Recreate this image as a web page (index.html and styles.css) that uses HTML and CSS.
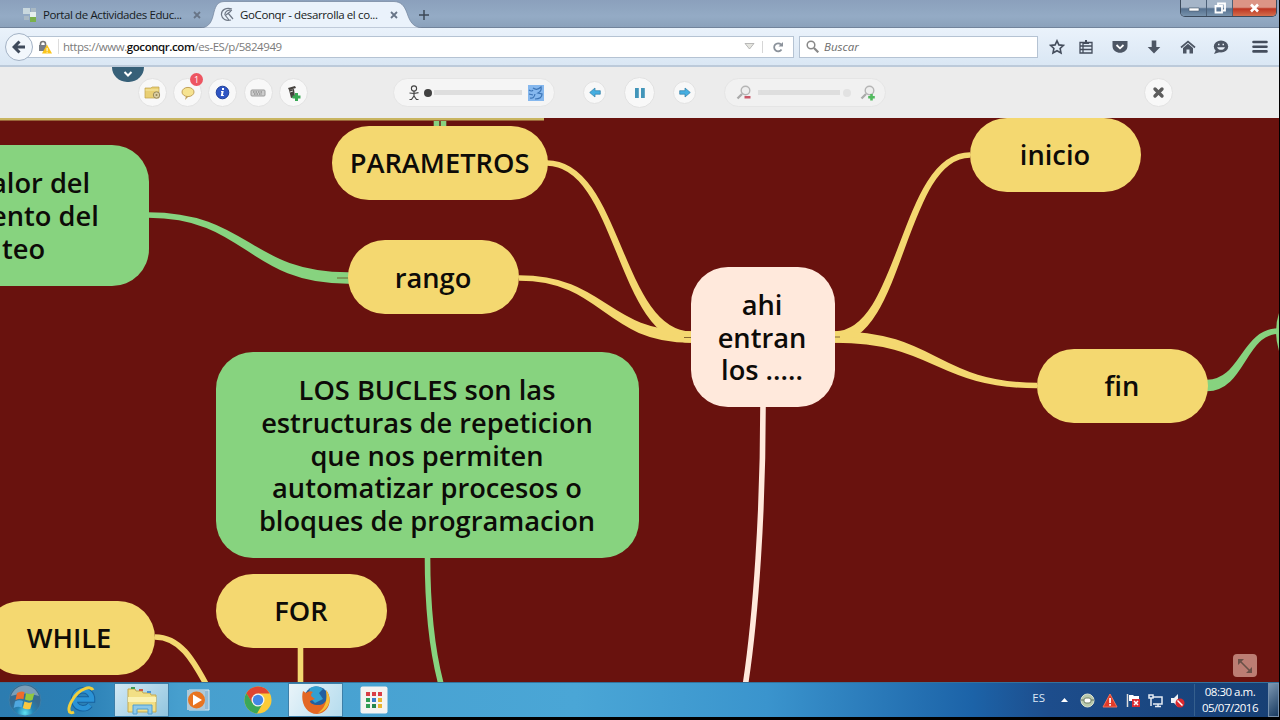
FILE: index.html
```html
<!DOCTYPE html>
<html lang="es">
<head>
    <meta charset="UTF-8">
    <meta name="viewport" content="width=device-width, initial-scale=1.0">
    <title>GoConqr - desarrolla el conocimiento</title>
    <link rel="stylesheet" href="styles.css">
</head>
<body>
  <div class="screen">
    <!-- Tabs -->
    <header class="tab-strip">
      <div class="tab">
        <svg class="favicon" width="14" height="14" viewBox="0 0 14 14"><path fill="#c9d8de" d="M0 0h7v6H0z"/><path fill="#e6efee" d="M7 4h6v5H7z"/><path fill="#a9b9c4" d="M8 0h5v4H8zM1 8h5v4H1z"/><path fill="#7ab04c" d="M7 9h6v5H7z"/></svg>
        <span class="tab-title t1">Portal de Actividades Educ...</span>
        <svg class="tab-close" width="8" height="8" viewBox="0 0 8 8"><path d="M1 1l6 6M7 1L1 7"/></svg>
      </div>
      <div class="tab active">
        <svg class="tab-shape" width="224" height="27" viewBox="0 0 224 27"><path d="M-4 27C5 26 7 20 9 11C11 4 13 1 19 .5H189C196 1 199 4 202 12C205 21 208 26 217 27Z" fill="#eaf2fb" stroke="#71839b" stroke-width=".7"/></svg>
        <svg class="favicon" width="14" height="15" viewBox="0 0 14 15"><path d="M12 2C6 0 1 3 1.500 8C2 12 6 14.500 11 13M12 3.500C8 2 4.500 5 5 8M8 6l5 6M11 4L6 8M5 8l4 5" fill="none" stroke="#6e7785" stroke-width="1.200"/></svg>
        <span class="tab-title t2">GoConqr - desarrolla el co...</span>
        <svg class="tab-close" width="8" height="8" viewBox="0 0 8 8"><path d="M1 1l6 6M7 1L1 7"/></svg>
      </div>
      <svg class="new-tab" width="10" height="10" viewBox="0 0 10 10"><path d="M5 0v10M0 5h10" stroke="#3d4856" stroke-width="1.500"/></svg>
      <div class="window-buttons">
        <span class="win-btn"><svg width="12" height="10" viewBox="0 0 12 10"><path d="M1 5h10v3H1z" fill="#fff" stroke="#4b5b6d" stroke-width=".6"/></svg></span>
        <span class="win-btn"><svg width="12" height="12" viewBox="0 0 12 12"><path d="M4 3V1.500h7v7H9M1.500 4H8v6.500H1.500Z" fill="none" stroke="#fff" stroke-width="1.800"/></svg></span>
        <span class="win-btn win-close"><svg width="11" height="10" viewBox="0 0 11 10"><path d="M2 1.500l7 7M9 1.500l-7 7" stroke="#fff" stroke-width="2.600"/></svg></span>
      </div>
    </header>

    <!-- Address bar -->
    <nav class="nav-bar">
      <span class="back"><svg width="14" height="14" viewBox="0 0 14 14"><path d="M13 7H3M7.500 1.500L2 7l5.500 5.500" fill="none" stroke="#3f4a5b" stroke-width="3"/></svg></span>
      <div class="url-box">
        <svg class="lock" width="14" height="14" viewBox="0 0 14 14"><path d="M2.500 6V4a2.500 2.500 0 0 1 5 0v2" fill="none" stroke="#777" stroke-width="1.600"/><path d="M1 5h7.500v6H1z" fill="#777c84"/><path d="M9 4.500l5 9H4z" fill="#fbc51b"/><path d="M8.600 8h1v3h-1zM8.600 11.700h1v1h-1z" fill="#fff"/></svg>
        <span class="url">https://www.<b>goconqr.com</b>/es-ES/p/5824949</span>
        <svg class="drop" width="11" height="7" viewBox="0 0 11 7"><path d="M1 .5h9L5.500 6z" fill="#e5e5df" stroke="#aaa" stroke-width=".8"/></svg>
        <span class="reload"><svg width="12" height="12" viewBox="0 0 12 12"><path d="M9 3.500A4 4 0 1 0 9.500 8.500" fill="none" stroke="#8b929b" stroke-width="1.800"/><path d="M6.500 5.500H11V1z" fill="#8b929b"/></svg></span>
      </div>
      <div class="search-box">
        <svg width="13" height="13" viewBox="0 0 13 13"><circle cx="5" cy="5" r="3.800" fill="none" stroke="#888" stroke-width="1.500"/><path d="M8 8l4.300 4.300" stroke="#888" stroke-width="2.200"/></svg>
        <span>Buscar</span>
      </div>
      <div class="nav-icons">
        <svg width="16" height="16" viewBox="0 0 16 16"><path d="M8 1.800l1.900 4.100 4.500.5-3.300 3.100.9 4.400L8 11.700l-4 2.200.9-4.400L1.600 6.400l4.500-.5z" fill="none" stroke="#444d5c" stroke-width="1.600"/></svg>
        <svg width="16" height="16" viewBox="0 0 16 16"><path d="M2 3.500h12v10.500H2zM2 7h12M2 10.500h12M5 4v10" fill="none" stroke="#444d5c" stroke-width="1.300"/><path d="M5 3h2V1h2v2h2v2H5z" fill="#444d5c"/></svg>
        <svg width="16" height="16" viewBox="0 0 16 16"><path d="M.5 2h15v5c0 9-15 9-15 0z" fill="#4d5664"/><path d="M4.500 6L8 9.300 11.500 6" fill="none" stroke="#fff" stroke-width="1.800"/></svg>
        <svg width="16" height="16" viewBox="0 0 16 16"><path d="M5.700 1.500h4.600V8h4L8 14.500 1.700 8h4z" fill="#4d5664"/></svg>
        <svg width="16" height="16" viewBox="0 0 16 16"><path d="M1 8.500l7-6 7 6" fill="none" stroke="#4d5664" stroke-width="1.700"/><path d="M3 9l5-4.300L13 9v5.500H9.500v-4h-3v4H3z" fill="#4d5664"/></svg>
        <svg width="16" height="16" viewBox="0 0 16 16"><ellipse cx="8" cy="7.500" rx="7.200" ry="6" fill="#4d5664"/><path d="M3 11l-2 4 6-2z" fill="#4d5664"/><path d="M4 8.300c1 3.400 7 3.400 8 0z" fill="#e7eff8"/><path d="M5 5.500h1.500M9.500 5.500H11" stroke="#e7eff8" stroke-width="1.300"/></svg>
        <svg class="menu" width="16" height="16" viewBox="0 0 16 16"><path d="M1.500 3h13M1.500 7.700h13M1.500 12.400h13" stroke="#444d5c" stroke-width="2.600" stroke-linecap="round"/></svg>
      </div>
    </nav>

    <!-- Mind map toolbar -->
    <div class="toolbar">
      <span class="pull-down"><svg width="10" height="8" viewBox="0 0 10 8"><path d="M1.500 2L5 5.500 8.500 2" fill="none" stroke="#fff" stroke-width="2"/></svg></span>
      <div class="tools">
        <span class="round"><svg width="18" height="16" viewBox="0 0 18 16"><path d="M1 3h6l1-1h7v11H1z" fill="#e9cf73" stroke="#c0a24b" stroke-width=".7"/><path d="M1.500 5h13" stroke="#f8eba9"/><circle cx="12.500" cy="10" r="3.200" fill="#ddd0a3" stroke="#988a61"/><circle cx="12.500" cy="10" r="1" fill="#968650"/></svg></span>
        <span class="round"><svg width="16" height="16" viewBox="0 0 16 16"><path d="M6 11l-1 4 4-4z" fill="#bc9d55"/><ellipse cx="8" cy="7" rx="6" ry="4.600" fill="#f6e391" stroke="#c3a25b"/></svg><i class="badge">1</i></span>
        <span class="round"><svg width="15" height="15" viewBox="0 0 15 15"><circle cx="7.500" cy="7.500" r="6.300" fill="#2f55c4" stroke="#1f409c"/><path d="M7 3h2v2H7zM6 6h2.700l-.8 4h1v1H5.800l.7-4H6z" fill="#fff"/></svg></span>
        <span class="round"><svg width="16" height="12" viewBox="0 0 16 12"><rect x="1" y="3" width="14" height="6" rx="1" fill="#ccc" stroke="#999"/><path d="M3 5h10M4 7h8" stroke="#777" stroke-dasharray="1.500 1"/></svg></span>
        <span class="round"><svg width="16" height="16" viewBox="0 0 16 16"><path d="M3 3l7-2 1 2-7 2zM4 5l5-1 1 8-4 1z" fill="#45413e"/><path d="M5 7l3-1" stroke="#ddd"/><path d="M10 8h3v2.500h2.500v3H13V16h-3v-2.500H7.500v-3H10z" fill="#38a853"/></svg></span>
      </div>
      <div class="slider">
        <svg width="12" height="18" viewBox="0 0 12 18"><circle cx="6" cy="4.500" r="2.600" fill="none" stroke="#444" stroke-width="1.100"/><path d="M6 7v5M1.500 9l4.500.5 4.500-.8M1.500 15.500h2L6 12l2.500 3.500h2" fill="none" stroke="#444" stroke-width="1.200"/></svg>
        <i class="knob"></i><i class="track"></i>
        <svg class="sketch" width="16" height="16" viewBox="0 0 16 16"><path fill="#86b8ee" d="M0 0h16v16H0z"/><path d="M5 3q4 3 8-1q1 4-3 6l4 1q0 5-7 5M1 5q3 2 4 0M1 9l4 1M2 13q4 1 5-4" fill="none" stroke="#3c74b5" stroke-width="1.200"/></svg>
      </div>
      <div class="player">
        <span class="round small"><svg width="12" height="11" viewBox="0 0 12 11"><path d="M6 1v2.700h5.300v3.500H6V10L.7 5.500z" fill="#45aee1" stroke="#317ea6" stroke-width=".7"/></svg></span>
        <span class="round big"><svg width="10" height="12" viewBox="0 0 10 12"><path d="M0 1h3.800v10H0zM6 1h3.800v10H6z" fill="#4295b9"/></svg></span>
        <span class="round small"><svg width="12" height="11" viewBox="0 0 12 11"><path d="M6 1v2.700H.7v3.500H6V10l5.300-4.500z" fill="#45aee1" stroke="#317ea6" stroke-width=".7"/></svg></span>
      </div>
      <div class="slider zoom">
        <svg width="16" height="16" viewBox="0 0 16 16"><circle cx="9.500" cy="5.500" r="4.300" fill="#eee" stroke="#b5b5b5" stroke-width="1.400"/><path d="M6 9l-4.500 4.500" stroke="#aaa" stroke-width="2.300"/><path d="M8.500 11h6v2.500h-6z" fill="#c95768"/></svg>
        <i class="track"></i><i class="knob"></i>
        <svg width="16" height="16" viewBox="0 0 16 16"><circle cx="9.500" cy="5.500" r="4.300" fill="#eee" stroke="#b5b5b5" stroke-width="1.400"/><path d="M6 9l-4.500 4.500" stroke="#aaa" stroke-width="2.300"/><path d="M10.200 9h2.600v2h2v2.500h-2v2h-2.600v-2h-2V11h2z" fill="#51b95e"/></svg>
      </div>
      <span class="round close"><svg width="13" height="13" viewBox="0 0 13 13"><path d="M3 3l7 7M10 3l-7 7" stroke="#5c5c5c" stroke-width="3.400" stroke-linecap="round"/></svg></span>
    </div>

    <!-- Mind map -->
    <main class="canvas">
      <svg class="links" width="1279" height="564" viewBox="0 118 1279 564">
        <path class="bar" d="M0 118H544V120.500H0z"/>
        <path class="green" d="M436.500 121V128M443.500 121V128"/>
        <path class="green" d="M148 215C248 215 248 275 348 275V281C248 281 248 215 148 215Z"/>
        <path class="yellow" d="M547 163C619 163 619 334 691 334V340C619 340 619 163 547 163Z"/>
        <path class="yellow" d="M519 278C605 278 605 334 691 334V340C605 340 605 278 519 278Z"/>
        <path class="yellow" d="M970 155C902 155 902 334 835 334V340C902 340 902 155 970 155Z"/>
        <path class="yellow" d="M1037 385.500C936 385.500 936 334 835 334V340C936 340 936 385.500 1037 385.500Z"/>
        <path class="green" d="M1279 331C1243 331 1243 382.500 1207 382.500V388.500C1243 388.500 1243 331 1279 331Z"/>
        <path class="yellow line" d="M155 637C180 637 193 660 206 684M300.500 646V684"/>
        <path class="green line" d="M427.500 556C427.500 605 432 650 441 684"/>
        <path class="cream line" d="M763 406C763 510 756 615 745.500 684"/>
        <path class="slit" d="M337 278H348M684 337.500H691M835 337H840"/>
        <path class="edge" d="M1279 313Q1273 331 1279 351Z"/>
      </svg>
      <div class="node node-green n-valor"><span>alor del</span><span>ento del</span><span class="last">teo</span></div>
      <div class="node n-parametros">PARAMETROS</div>
      <div class="node n-rango">rango</div>
      <div class="node node-cream n-ahi">ahi<br>entran<br>los .....</div>
      <div class="node n-inicio">inicio</div>
      <div class="node n-fin">fin</div>
      <div class="node node-green n-bucles">LOS BUCLES son las<br>estructuras de repeticion<br>que nos permiten<br>automatizar procesos o<br>bloques de programacion</div>
      <div class="node n-for">FOR</div>
      <div class="node n-while">WHILE</div>
      <span class="expand"><svg width="18" height="18" viewBox="0 0 18 18"><path d="M4 4l10 10" stroke="#695048" stroke-width="1.600"/><path d="M2 2h6L2 8zM16 16h-6l6-6z" fill="#695048"/></svg></span>
    </main>

    <!-- Windows taskbar -->
    <footer class="taskbar">
      <span class="task start"><svg width="36" height="34" viewBox="0 0 36 34"><defs><radialGradient id="orb" cy=".9"><stop offset="0" stop-color="#5ee3f4"/><stop offset=".5" stop-color="#2483b6"/><stop offset="1" stop-color="#356b92"/></radialGradient></defs><circle cx="18" cy="17" r="16" fill="url(#orb)" stroke="#3c7faa"/><path d="M4 13C9-1 27-1 32 13Q18 8 4 13" fill="#fff" opacity=".35"/><path d="M10 10q4-2.500 7.500-1l-1 7q-4-1-8 1z" fill="#ef6b2b"/><path d="M19 10q4 2 8.500 0l-2 7q-3.500 1.500-7.500-.5z" fill="#91c83f"/><path d="M8 18.500q4-2 8-.5l-1.300 6.500q-4-1.500-8 .5z" fill="#50a7df"/><path d="M17.500 18.500q4 2 7.700.5l-2 7q-4 1-7.400-1z" fill="#fac741"/></svg></span>
      <span class="task ie"><svg width="30" height="30" viewBox="0 0 30 30"><path d="M23 20A9 9 0 1 1 25 14.500H9" fill="none" stroke="#17629f" stroke-width="6.500"/><path d="M23 20A9 9 0 1 1 25 14.500H9" fill="none" stroke="#2b93d6" stroke-width="4.500"/><path d="M26 5C24 0 12 4 6 14C0 23 1 30 7 27" fill="none" stroke="#f0cf3d" stroke-width="3"/></svg></span>
      <span class="task open explorer"><svg width="32" height="30" viewBox="0 0 32 30"><path d="M2 4h7l1 2h6l1 2h7l1 2h5v17H2z" fill="#f2df85" stroke="#c4a94e"/><path d="M2 12h28v5H2z" fill="#fbf2b4"/><path d="M5 2h4v2H5z" fill="#3c9c54"/><path d="M13 4h4v2h-4z" fill="#cf5744"/><path d="M21 6h4v2h-4z" fill="#4c92d2"/><path d="M7 29V20h19v9h-4v-5H11v5z" fill="#8ec9e9" stroke="#4f9ed1"/></svg></span>
      <span class="task media"><svg width="25" height="24" viewBox="0 0 25 24"><path d="M3 2h20v20H3z" fill="#90bbd7" stroke="#dcebf3"/><path d="M1 2h18v20H1z" fill="#aec9d8"/><circle cx="10.500" cy="12" r="8.500" fill="#e87420"/><path d="M7 6.500l9 5.500-9 5.500z" fill="#fff"/></svg></span>
      <span class="task chrome"><svg width="28" height="28" viewBox="0 0 28 28"><circle cx="14" cy="14" r="13.500" fill="#fbcb38"/><path d="M25.700 7.500H14L8 17 2.300 7.250A13.500 13.500 0 0 1 25.700 7.500" fill="#df4532"/><path d="M2.300 7.250A13.500 13.500 0 0 0 13 27.500L19 17 8.500 17z" fill="#3ba757"/><circle cx="14" cy="14" r="6.500" fill="#f4f4f0"/><circle cx="14" cy="14" r="5.200" fill="#4388e6"/></svg></span>
      <span class="task open firefox"><svg width="30" height="30" viewBox="0 0 30 30"><circle cx="15.500" cy="14" r="12.500" fill="#245e9f"/><path d="M9 3q7-4 13 1l-4 4 4 6-8 4-7-7z" fill="#32a0d2"/><path d="M2 6C-1 17 5 29 16 29C29 28 32 13 25 5C28 14 24 20 17 20C12 20 9 18 9 16L14 14 10 11Q10 8 12 7Q8 5 5 8z" fill="#e36724"/><path d="M25 5C32 14 28 25 17 28C26 21 26 14 25 5" fill="#f6bd35"/></svg></span>
      <span class="task apps"><svg width="28" height="28" viewBox="0 0 28 28"><rect x=".5" y=".5" width="27" height="27" rx="2" fill="#f4f3f1"/><path d="M6 6h4v4H6zM12 6h4v4h-4zM18 6h4v4h-4z" fill="#d93e46"/><path d="M6 12h4v4H6zM6 18h4v4H6z" fill="#2f9c54"/><path d="M12 12h4v4h-4z" fill="#3a7cc8"/><path d="M18 12h4v4h-4zM18 18h4v4h-4z" fill="#e9b52f"/><path d="M12 18h4v4h-4z" fill="#26854c"/></svg></span>
      <div class="tray">
        <span class="lang">ES</span>
        <svg class="up" width="7" height="4" viewBox="0 0 7 4"><path d="M0 4l3.500-4L7 4z" fill="#fff"/></svg>
        <svg width="15" height="15" viewBox="0 0 15 15"><circle cx="7.500" cy="7.500" r="6.500" fill="#b8c9ac" stroke="#dde4d0"/><path d="M1 7h13" stroke="#687761"/><rect x="4" y="5" width="7" height="5" rx="2" fill="#fff" stroke="#718067"/></svg>
        <svg class="warn" width="16" height="15" viewBox="0 0 16 15"><path d="M8 1l7 13H1z" fill="#e23b29" stroke="#f17158"/><path d="M7.200 5h1.700v5H7.200zM7.200 11h1.700v1.700H7.200z" fill="#fff"/></svg>
        <svg class="flag" width="15" height="15" viewBox="0 0 15 15"><path d="M1.500 1v13" stroke="#ddd" stroke-width="1.500"/><path d="M3 2h4l1 1h5v6H7L6 8H3z" fill="#fff"/><path d="M6 6h8v8H6z" fill="#da2c32"/><path d="M8 8l4 4M12 8l-4 4" stroke="#fff" stroke-width="1.500"/></svg>
        <svg width="15" height="15" viewBox="0 0 15 15"><path d="M5 4h9v7H5M7 13.500h6M10 11v3M1 2h4v3H1zM3 5v8" fill="none" stroke="#e5ebf3" stroke-width="1.500"/></svg>
        <svg width="15" height="15" viewBox="0 0 15 15"><path d="M1 5h3l4-4v13l-4-4H1z" fill="#eef2f6"/><circle cx="10" cy="10" r="4.500" fill="#db292f"/><path d="M7.500 7.500l5 5" stroke="#fff" stroke-width="1.500"/></svg>
        <div class="clock"><span>08:30 a.m.</span><span>05/07/2016</span></div>
        <i class="show-desktop"></i>
      </div>
    </footer>
  </div>
</body>
</html>
```
FILE: styles.css
```css
* {
  box-sizing: border-box;
}

body {
  margin: 0;
  background: #000;
  font-family: "Open Sans", "Noto Sans", sans-serif;
}

svg {
  display: block;
  flex: none;
}

.screen {
  display: flex;
  flex-direction: column;
  width: 1280px;
  height: 720px;
  padding: 0 1px 3px 0;
  overflow: hidden;
}

/* tabs */
.tab-strip {
  display: flex;
  height: 28px;
  flex: none;
  background: linear-gradient(#8ba0bc, #94abc5 60%, #8ba1bb);
  border-bottom: 1px solid #71839b;
}

.tab {
  display: flex;
  align-items: center;
  position: relative;
  width: 205px;
  padding: 2px 0 0 23px;
}

.tab.active {
  width: 213px;
  padding-left: 15px;
}

.tab-shape {
  position: absolute;
  left: 0;
  top: 1px;
  overflow: visible;
}

.favicon,
.tab-title,
.tab-close {
  position: relative;
}

.tab-title {
  margin-left: 6px;
  font-size: 11.5px;
  line-height: 16px;
  white-space: nowrap;
  color: #161b22;
}

.t1 {
  width: 150px;
  letter-spacing: -0.4px;
}

.t2 {
  width: 150px;
  letter-spacing: -0.38px;
}

.tab-close path {
  stroke: #687587;
  stroke-width: 1.8;
}

.new-tab {
  margin: 10px 0 0 1px;
}

.window-buttons {
  display: flex;
  height: 17px;
  margin-left: auto;
  margin-right: 2px;
  border: 1px solid #3c4b5d;
  border-top: 0;
  border-radius: 0 0 5px 5px;
  overflow: hidden;
}

.win-btn {
  display: flex;
  align-items: center;
  justify-content: center;
  width: 26px;
  border-right: 1px solid #4c6077;
  background: linear-gradient(#a5b5c8 45%, #56718f 55%, #7792ac);
}

.win-close {
  width: 43px;
  border: 0;
  background: linear-gradient(#dc9586 45%, #bd3522 55%, #d46e4d);
}

/* address bar */
.nav-bar {
  display: flex;
  align-items: center;
  position: relative;
  height: 39px;
  flex: none;
  padding-left: 5px;
  background: linear-gradient(#eaf2fb, #dae7f4);
  border-bottom: 2px solid #bccada;
}

.back {
  display: flex;
  align-items: center;
  justify-content: center;
  z-index: 1;
  width: 28px;
  height: 28px;
  border: 1px solid #a3b2c5;
  border-radius: 50%;
  background: #f2f7fc;
}

.url-box,
.search-box {
  display: flex;
  align-items: center;
  height: 22px;
  background: #fff;
  border: 1px solid #b5c3d3;
}

.url-box {
  width: 768px;
  margin-left: -7px;
  padding-left: 11px;
}

.url {
  width: 684px;
  margin-left: 6px;
  padding-left: 4px;
  border-left: 1px solid #ddd;
  font-size: 11.5px;
  line-height: 15px;
  letter-spacing: -0.43px;
  color: #7b7b7b;
}

.url b {
  font-weight: 600;
  color: #111;
}

.drop {
  margin-left: 2px;
}

.reload {
  margin-left: 7px;
  padding-left: 9px;
  border-left: 1px solid #d6d6d6;
}

.search-box {
  width: 239px;
  margin-left: 5px;
  padding-left: 6px;
  gap: 5px;
  font-size: 11.5px;
  font-style: italic;
  color: #6d6d6d;
}

.nav-icons {
  display: flex;
  gap: 17.9px;
  margin-left: 11px;
}

.nav-icons svg:first-child {
  margin-right: -5px;
}

.nav-icons .menu {
  margin-left: 5px;
}

/* toolbar */
.toolbar {
  display: flex;
  align-items: center;
  position: relative;
  height: 51px;
  flex: none;
  padding-left: 138px;
  background: #ececec;
}

.pull-down {
  display: flex;
  justify-content: center;
  position: absolute;
  left: 112px;
  top: 0;
  width: 32px;
  height: 15px;
  padding-top: 3px;
  border-radius: 0 0 16px 16px;
  background: #376078;
}

.round {
  display: flex;
  align-items: center;
  justify-content: center;
  position: relative;
  width: 29px;
  height: 29px;
  border: 1px solid #e2e2e2;
  border-radius: 50%;
  background: #f8f8f8;
}

.tools {
  display: flex;
  gap: 6.2px;
  width: 255px;
}

.badge {
  position: absolute;
  left: 16px;
  top: -6px;
  width: 13px;
  height: 13px;
  border-radius: 50%;
  background: #ed5561;
  color: #fff;
  font-size: 9px;
  font-style: normal;
  line-height: 13px;
  text-align: center;
}

.slider {
  display: flex;
  align-items: center;
  width: 162px;
  height: 29px;
  padding-left: 14px;
  border: 1px solid #e5e5e5;
  border-radius: 15px;
  background: #f5f5f5;
}

.knob {
  width: 8px;
  height: 8px;
  margin-left: 4px;
  border-radius: 50%;
  background: #414141;
}

.track {
  width: 88px;
  height: 5px;
  margin-left: 2px;
  background: #dedede;
}

.sketch {
  margin-left: 6px;
}

.player {
  display: flex;
  align-items: center;
  gap: 18px;
  margin-left: 28px;
}

.small {
  width: 23px;
  height: 23px;
}

.big {
  width: 31px;
  height: 31px;
}

.zoom {
  margin-left: 28px;
  padding-left: 11px;
  background: #f1f1f1;
}

.zoom .track {
  width: 82px;
  margin-left: 6px;
}

.zoom .knob {
  margin: 0 9px 0 3px;
  background: #e2e2e2;
}

.close {
  margin-left: 258px;
}

/* mind map */
.canvas {
  position: relative;
  height: 564px;
  flex: none;
  overflow: hidden;
  background: #69120e;
}

.links {
  position: absolute;
  left: 0;
  top: 0;
}

.yellow {
  fill: #f4d870;
  stroke: #f4d870;
  stroke-width: 5.6;
}

.green {
  fill: #87d37f;
  stroke: #87d37f;
  stroke-width: 5.6;
}

.cream {
  stroke: #ffe9dc;
  stroke-width: 5.6;
}

.line {
  fill: none;
}

.bar {
  fill: #c9b561;
}

.edge {
  fill: #87d37f;
}

.slit {
  stroke: #6b4a1e;
  stroke-width: 0.8;
}

.node {
  display: flex;
  align-items: center;
  justify-content: center;
  position: absolute;
  height: 74px;
  padding: 1px 1px 0 0;
  border-radius: 37px;
  background: #f4d870;
  color: #0d0b08;
  font-size: 27.25px;
  font-weight: 600;
  line-height: 32.8px;
  text-align: center;
  white-space: nowrap;
}

.node-green {
  background: #87d37f;
}

.node-cream {
  background: #ffe9dc;
}

/* runs off the left edge of the map */
.n-valor {
  flex-direction: column;
  align-items: flex-start;
  left: -9px;
  top: 27px;
  width: 158px;
  height: 141px;
  padding-top: 2px;
  border-radius: 0 37px 37px 0;
}

.n-valor .last {
  padding-left: 11px;
}

.n-parametros {
  left: 332px;
  top: 8px;
  width: 216px;
}

.n-rango {
  left: 348px;
  top: 122px;
  width: 171px;
  padding-top: 2px;
}

.n-ahi {
  left: 691px;
  top: 149px;
  width: 144px;
  height: 140px;
  padding: 2px 2px 0 0;
}

.n-inicio {
  left: 970px;
  top: 0;
  width: 171px;
}

.n-fin {
  left: 1037px;
  top: 231px;
  width: 171px;
}

.n-bucles {
  left: 216px;
  top: 234px;
  width: 423px;
  height: 206px;
  padding-top: 2px;
}

.n-for {
  left: 216px;
  top: 456px;
  width: 171px;
}

.n-while {
  left: -16px;
  top: 483px;
  width: 171px;
}

.expand {
  display: flex;
  align-items: center;
  justify-content: center;
  position: absolute;
  left: 1233px;
  top: 536px;
  width: 24px;
  height: 23px;
  border-radius: 4px;
  background: #bc7d73;
}

/* taskbar */
.taskbar {
  display: flex;
  align-items: center;
  height: 35px;
  flex: none;
  border-top: 1px solid #34729c;
  background: linear-gradient(90deg, #2c7cb0, #2a7fb5 6%, #479fce 14%, #4aa6d6 45%, #3a94cd 60%, #1c63a8 76%, #1d4d8c 82%, #173f73);
}

.task {
  display: flex;
  align-items: center;
  justify-content: center;
  width: 58px;
  height: 34px;
}

.start {
  width: 50px;
}

.ie {
  width: 64px;
}

.open {
  width: 55px;
  border: 1px solid #3d7fa8;
  background: linear-gradient(135deg, #d2e9f4, #91c5df);
}

.media {
  width: 59px;
}

.chrome {
  width: 60px;
}

.firefox {
  background: linear-gradient(120deg, #e9f4f9, #b5dcee);
}

.apps {
  width: 61px;
}

.tray {
  display: flex;
  align-items: center;
  height: 34px;
  margin-left: auto;
  color: #fff;
}

.tray svg {
  margin-left: 7.2px;
}

.lang {
  margin-bottom: 5px;
  font-size: 11.5px;
  color: #dce8f5;
}

.tray .up {
  margin-left: 16px;
  margin-right: 5px;
}

.clock {
  display: flex;
  flex-direction: column;
  align-items: center;
  width: 74px;
  margin-left: 9px;
  padding-right: 3px;
  border-left: 1px solid #355f8d;
  font-size: 11.5px;
  line-height: 16px;
  letter-spacing: -0.5px;
}

.show-desktop {
  width: 11px;
  height: 34px;
  border: 1px solid #7590ad;
  background: linear-gradient(135deg, #7b96b1, #193b61);
}
```
